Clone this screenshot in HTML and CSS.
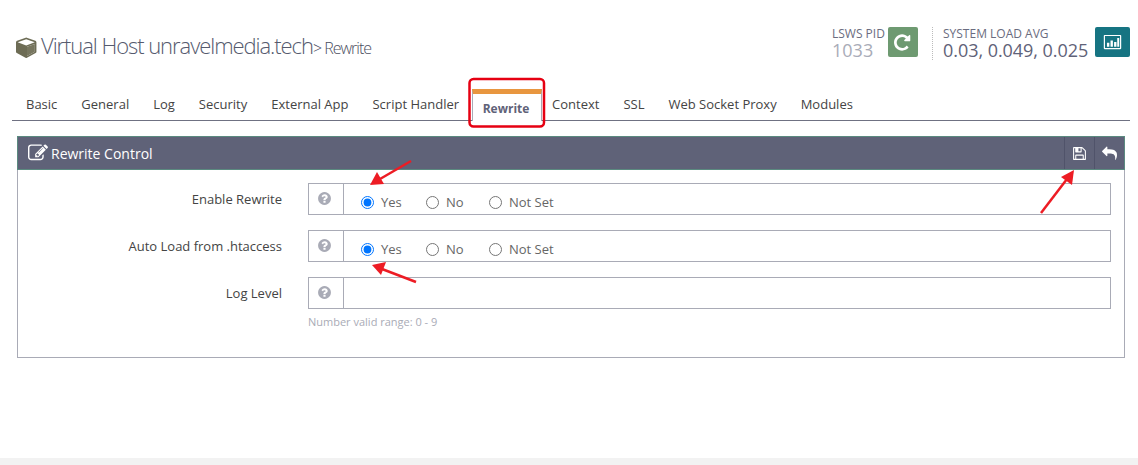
FILE: index.html
```html
<!DOCTYPE html>
<html lang="en">
<head>
<meta charset="utf-8">
<title>Rewrite</title>
<link rel="stylesheet" href="styles.css">
</head>
<body>
<div class="page">
  <header class="top">
    <h1 class="title">
      <svg class="cube" viewBox="0 0 1792 1792"><path d="M896 1629l640-349v-636l-640 233v752zm-64-864l698-254-698-254-698 254zm832-252v768q0 35-18 65t-49 47l-704 384q-28 16-61 16t-61-16l-704-384q-31-17-49-47t-18-65v-768q0-40 23-73t61-47l704-256q22-8 44-8t44 8l704 256q38 14 61 47t23 73z"/><path class="cube-face" d="M896 1629l640-349v-636l-640 233z"/></svg>
      <span class="title-main">Virtual Host unravelmedia.tech</span><span class="title-sub">&gt; Rewrite</span>
    </h1>
    <div class="stats">
      <div class="stat stat-pid">
        <div class="stat-label">LSWS PID</div>
        <div class="stat-value pid">1033</div>
      </div>
      <button class="btn btn-green" type="button">
        <svg viewBox="0 0 1792 1792"><path d="M1536 256v448q0 26-19 45t-45 19h-448q-42 0-59-40-17-39 14-69l138-138q-148-137-349-137-104 0-198.5 40.5t-163.5 109.5-109.5 163.5-40.5 198.5 40.5 198.5 109.5 163.5 163.5 109.5 198.5 40.5q119 0 225-52t179-147q7-10 23-12 15 0 25 9l137 138q9 8 9.5 20.5t-7.5 22.5q-109 132-264 204.5t-327 72.5q-156 0-298-61t-245-164-164-245-61-298 61-298 164-245 245-164 298-61q147 0 284.5 55.5t244.5 156.5l130-129q29-31 70-14 39 17 39 59z"/></svg>
      </button>
      <div class="stat stat-load">
        <div class="stat-label">SYSTEM LOAD AVG</div>
        <div class="stat-value load">0.03, 0.049, 0.025</div>
      </div>
      <button class="btn btn-teal" type="button">
        <svg viewBox="0 0 24 20"><path d="M2 1h20a1 1 0 0 1 1 1v16a1 1 0 0 1-1 1H2a1 1 0 0 1-1-1V2a1 1 0 0 1 1-1zm.5 1.5v15h19v-15z"/><path d="M5 11h3v5H5zM9.500 8h3v8h-3zM14 10h3v6h-3zM18 5h2.500v11H18z"/></svg>
      </button>
    </div>
  </header>

  <nav class="tabs">
    <a class="tab">Basic</a>
    <a class="tab">General</a>
    <a class="tab">Log</a>
    <a class="tab">Security</a>
    <a class="tab">External App</a>
    <a class="tab">Script Handler</a>
    <a class="tab tab-active">Rewrite</a>
    <a class="tab">Context</a>
    <a class="tab">SSL</a>
    <a class="tab">Web Socket Proxy</a>
    <a class="tab">Modules</a>
  </nav>

  <section class="widget">
    <div class="widget-head">
      <svg class="edit-icon" viewBox="0 0 1792 1792"><path d="M888 1184l116-116-152-152-116 116v56h96v96h56zm440-720q-16-16-33 1l-350 350q-17 17-1 33t33-1l350-350q17-17 1-33zm80 594v190q0 119-84.500 203.500t-203.500 84.500h-832q-119 0-203.500-84.500t-84.500-203.500v-832q0-119 84.500-203.500t203.500-84.500h832q63 0 117 25 15 7 18 23 3 17-9 29l-49 49q-14 14-32 8-23-6-45-6h-832q-66 0-113 47t-47 113v832q0 66 47 113t113 47h832q66 0 113-47t47-113v-126q0-13 9-22l64-64q15-15 35-7t20 29zm-96-738l288 288-672 672h-288v-288zm444 132l-92 92-288-288 92-92q28-28 68-28t68 28l152 152q28 28 28 68t-28 68z"/></svg>
      <h2 class="widget-title">Rewrite Control</h2>
      <div class="widget-actions">
        <span class="action"><svg viewBox="0 0 1792 1792"><path d="M512 1536h768v-384h-768v384zm896 0h128v-896q0-14-10-38.500t-20-34.500l-281-281q-10-10-34-20t-39-10v416q0 40-28 68t-68 28h-576q-40 0-68-28t-28-68v-416h-128v1280h128v-416q0-40 28-68t68-28h832q40 0 68 28t28 68v416zm-384-928v-320q0-13-9.500-22.500t-22.500-9.500h-192q-13 0-22.500 9.500t-9.500 22.500v320q0 13 9.500 22.500t22.500 9.500h192q13 0 22.500-9.500t9.500-22.500zm640 32v928q0 40-28 68t-68 28h-1344q-40 0-68-28t-28-68v-1344q0-40 28-68t68-28h928q40 0 88 20t76 48l280 280q28 28 48 76t20 88z"/></svg></span>
        <span class="action"><svg viewBox="0 0 1792 1792"><path d="M1792 1120q0 166-127 451-3 7-10.500 24t-13.500 30-13 22q-12 17-28 17-15 0-23.500-10t-8.500-25q0-9 2.500-26.500t2.500-23.500q5-68 5-123 0-101-17.500-181t-48.500-138.500-80-101-105.500-69.500-133-42.500-154-21.500-175.500-6h-224v256q0 26-19 45t-45 19-45-19l-512-512q-19-19-19-45t19-45l512-512q19-19 45-19t45 19 19 45v256h224q713 0 875 403 53 134 53 333z"/></svg></span>
      </div>
    </div>
    <form class="widget-body">
      <div class="row">
        <label class="row-label">Enable Rewrite</label>
        <div class="field">
          <span class="addon"><svg class="help" viewBox="0 0 1792 1792"><path d="M1024 1376v-192q0-14-9-23t-23-9h-192q-14 0-23 9t-9 23v192q0 14 9 23t23 9h192q14 0 23-9t9-23zm256-672q0-88-55.500-163t-138.500-116-170-41q-243 0-371 213-15 24 8 42l132 100q7 6 19 6 16 0 25-12 53-68 86-92 34-24 86-24 48 0 85.500 26t37.500 59q0 38-20 61t-68 45q-63 28-115.500 86.500t-52.500 125.500v36q0 14 9 23t23 9h192q14 0 23-9t9-23q0-19 21.500-49.500t54.500-49.500q32-18 49-28.500t46-35 44.500-48 28-60.500 12.500-81zm384 192q0 209-103 385.500t-279.500 279.500-385.500 103-385.500-103-279.500-279.500-103-385.500 103-385.500 279.500-279.500 385.500-103 385.500 103 279.500 279.500 103 385.500z"/></svg></span>
          <div class="radios">
            <label class="radio r-yes"><input type="radio" name="enable" checked>Yes</label>
            <label class="radio r-no"><input type="radio" name="enable">No</label>
            <label class="radio"><input type="radio" name="enable">Not Set</label>
          </div>
        </div>
      </div>
      <div class="row">
        <label class="row-label">Auto Load from .htaccess</label>
        <div class="field">
          <span class="addon"><svg class="help" viewBox="0 0 1792 1792"><path d="M1024 1376v-192q0-14-9-23t-23-9h-192q-14 0-23 9t-9 23v192q0 14 9 23t23 9h192q14 0 23-9t9-23zm256-672q0-88-55.500-163t-138.500-116-170-41q-243 0-371 213-15 24 8 42l132 100q7 6 19 6 16 0 25-12 53-68 86-92 34-24 86-24 48 0 85.500 26t37.500 59q0 38-20 61t-68 45q-63 28-115.500 86.500t-52.500 125.500v36q0 14 9 23t23 9h192q14 0 23-9t9-23q0-19 21.500-49.500t54.500-49.500q32-18 49-28.500t46-35 44.500-48 28-60.500 12.500-81zm384 192q0 209-103 385.500t-279.500 279.500-385.500 103-385.500-103-279.500-279.500-103-385.500 103-385.500 279.500-279.500 385.500-103 385.500 103 279.500 279.500 103 385.500z"/></svg></span>
          <div class="radios">
            <label class="radio r-yes"><input type="radio" name="auto" checked>Yes</label>
            <label class="radio r-no"><input type="radio" name="auto">No</label>
            <label class="radio"><input type="radio" name="auto">Not Set</label>
          </div>
        </div>
      </div>
      <div class="row">
        <label class="row-label">Log Level</label>
        <div class="field-wrap">
          <div class="field">
            <span class="addon"><svg class="help" viewBox="0 0 1792 1792"><path d="M1024 1376v-192q0-14-9-23t-23-9h-192q-14 0-23 9t-9 23v192q0 14 9 23t23 9h192q14 0 23-9t9-23zm256-672q0-88-55.500-163t-138.500-116-170-41q-243 0-371 213-15 24 8 42l132 100q7 6 19 6 16 0 25-12 53-68 86-92 34-24 86-24 48 0 85.500 26t37.500 59q0 38-20 61t-68 45q-63 28-115.500 86.500t-52.500 125.500v36q0 14 9 23t23 9h192q14 0 23-9t9-23q0-19 21.500-49.500t54.500-49.500q32-18 49-28.500t46-35 44.500-48 28-60.500 12.500-81zm384 192q0 209-103 385.500t-279.500 279.500-385.500 103-385.500-103-279.500-279.500-103-385.500 103-385.500 279.500-279.500 385.500-103 385.500 103 279.500 279.500 103 385.500z"/></svg></span>
            <input class="text-input" type="text">
          </div>
          <p class="hint">Number valid range: 0 - 9</p>
        </div>
      </div>
    </form>
  </section>
  <div class="spacer"></div>
  <footer class="foot"></footer>
</div>

<svg class="marks" viewBox="0 0 1138 465" width="1138" height="465">
  <rect class="mark-box" x="469.500" y="79" width="74.500" height="47.500" rx="4"/>
  <path class="mark-line" d="M411 161L380 179"/>
  <path class="mark-head" d="M370 185L377 172L384 184Z"/>
  <path class="mark-line" d="M416 282L382 269"/>
  <path class="mark-head" d="M372 265L386 262L381 275Z"/>
  <path class="mark-line" d="M1041 213L1067 179"/>
  <path class="mark-head" d="M1074 170L1072 185L1061 177Z"/>
</svg>
</body>
</html>
```

FILE: styles.css
```css
* { box-sizing: border-box; }
html, body { margin: 0; padding: 0; height: 100%; background: #fff; overflow: hidden; }
body { font-family: "Open Sans", sans-serif; font-size: 13px; color: #333; position: relative; }

.page { display: flex; flex-direction: column; height: 465px; }

.top { display: flex; justify-content: space-between; align-items: flex-start; height: 89px; padding: 28px 8px 0 16px; }
.title { display: flex; align-items: baseline; margin: 4px 0 0; font-weight: 300; color: #333; line-height: 26px; }
.cube { width: 22px; height: 22px; fill: #6d6c55; align-self: center; margin-right: 3px; }
.cube-face { fill: #77765f; }
.title-main { font-size: 22px; letter-spacing: -1.06px; color: #555a6e; }
.title-sub { font-size: 16px; letter-spacing: -1px; color: #4a4e60; }

.stats { display: flex; align-items: flex-start; margin-top: -1px; }
.stat-label { font-size: 12px; line-height: 13px; color: #6a6c80; }
.stat-value { font-size: 18px; line-height: 20px; }
.stat-pid { width: 56px; }
.pid { color: #a9acb8; }
.load { color: #5f6278; letter-spacing: -0.05px; }
.stat-load { margin-left: 14px; padding-left: 10px; border-left: 1px dotted #bbb; width: 163px; height: 33px; }
.btn { display: flex; align-items: center; justify-content: center; width: 30px; height: 30px; border: 0; padding: 0; border-radius: 2px; }
.btn svg { fill: #fff; }
.btn-green { background: #6e9a71; }
.btn-green svg { width: 19px; height: 19px; }
.btn-teal { background: #167482; width: 35px; }
.btn-teal svg { width: 19px; height: 16px; }

.tabs { display: flex; height: 32px; margin: 0 8px 0 12px; padding-left: 2px; border-bottom: 1px solid #6f7182; }
.tab { padding: 6px 12px 0; font-size: 13px; line-height: 18px; color: #444; white-space: nowrap; }
.tab-active { height: 32px; margin: 0 -2px 0 1px; width: 70px; padding: 5px 2px 0 0; text-align: center; font-size: 12px; font-weight: 700; color: #5f6278; line-height: 20px; background: #fff; border: 1px solid #a9abb6; border-top: 5px solid #e8963f; border-bottom: 0; }

.widget { margin: 15px 13px 0 17px; height: 222px; border: 1px solid #a9abb6; border-top: 0; }
.widget-head { display: flex; align-items: center; height: 34px; margin: 0 -1px; padding-left: 10px; background: #5f6278; border: 1px solid #5b8a80; color: #fff; }
.edit-icon { width: 20px; height: 20px; fill: #fff; margin-right: 3px; }
.widget-title { flex: 1; margin: 0; padding-top: 1px; font-size: 14px; font-weight: 400; line-height: 20px; }
.widget-actions { display: flex; align-self: stretch; }
.action { display: flex; align-items: center; justify-content: center; width: 30px; border-left: 1px solid #50536a; }
.action svg { width: 15px; height: 15px; fill: #fff; }

.widget-body { padding-top: 13px; }
.row { display: flex; margin-bottom: 15px; }
.row-label { width: 264px; padding-top: 7px; text-align: right; font-size: 13px; line-height: 18px; color: #444; }
.field-wrap { display: flex; flex-direction: column; margin-left: 26px; width: 803px; }
.field { display: flex; width: 803px; height: 32px; margin-left: 26px; border: 1px solid #a9abb6; }
.field-wrap .field { margin-left: 0; }
.addon { display: flex; justify-content: center; width: 35px; padding: 7px 3px 0 0; border-right: 1px solid #a9abb6; }
.help { width: 15px; height: 15px; fill: #a9abb6; }
.radios { display: flex; padding: 8px 0 0 17px; }
.radio { display: flex; align-items: center; height: 20px; font-size: 13px; color: #666; }
.radio input { width: 13px; height: 13px; margin: 0 7px 0 0; accent-color: #0075ff; }
.r-yes { width: 65px; }
.r-no { width: 63px; }
.text-input { flex: 1; border: 0; outline: 0; background: transparent; }
.hint { margin: 5px 0 0; font-size: 11px; line-height: 15px; color: #a9abb6; }

.spacer { flex: 1; }
.foot { height: 7px; background: #f2f2f2; }

.marks { position: absolute; left: 0; top: 0; pointer-events: none; }
.mark-box { fill: none; stroke: #e60012; stroke-width: 2.500; }
.mark-line { fill: none; stroke: #ed1c24; stroke-width: 2.500; }
.mark-head { fill: #ed1c24; }
```
